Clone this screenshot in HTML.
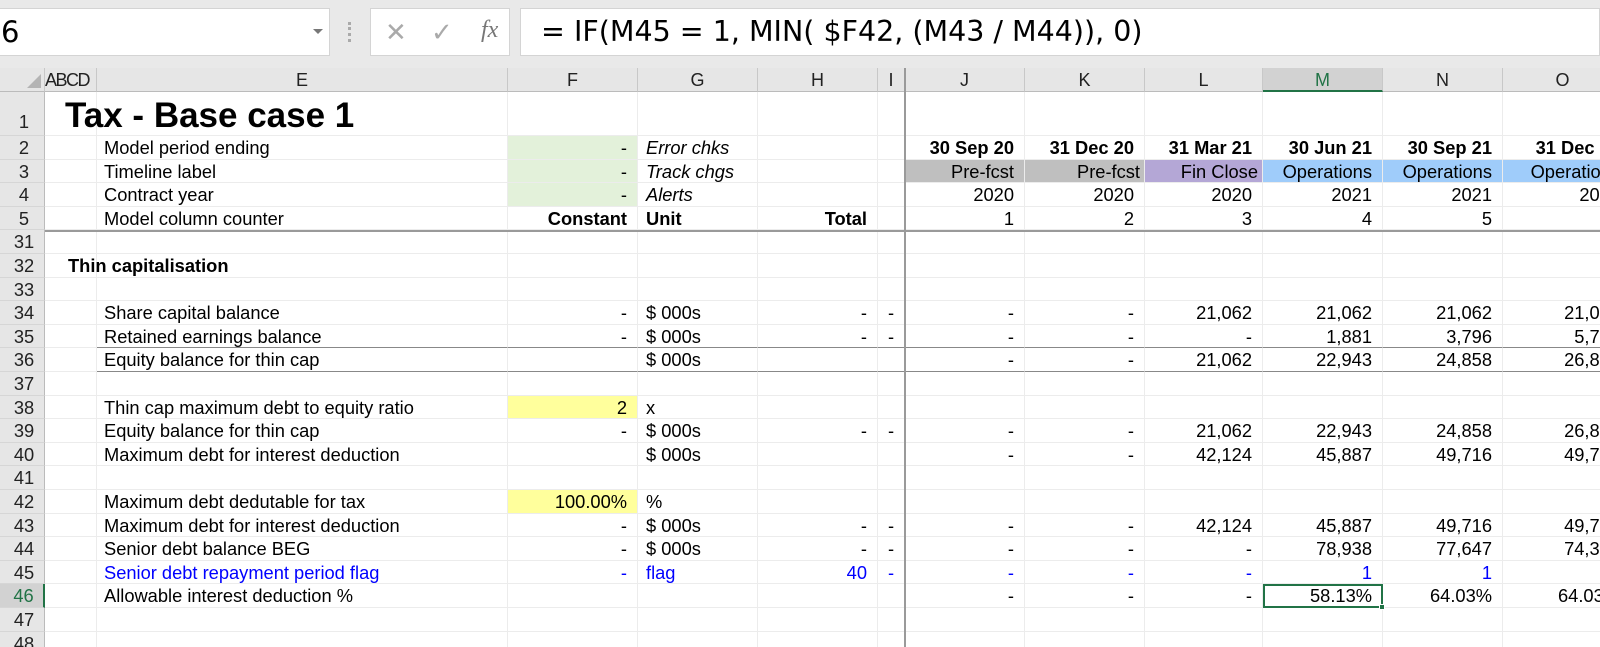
<!DOCTYPE html>
<html><head><meta charset="utf-8"><style>
*{box-sizing:border-box;margin:0;padding:0}
html,body{width:1600px;height:647px;overflow:hidden}
body{background:#fff;font-family:"Liberation Sans",Arial,sans-serif;font-size:18.3px;color:#000}
#w{position:relative;width:1600px;height:647px;overflow:hidden}
.top{position:absolute;left:0;top:0;width:1600px;height:68px;background:#e9e9e9}
.nb{position:absolute;left:-2px;top:8px;width:332px;height:48px;background:#fff;border:1px solid #d4d4d4;font-size:29px;line-height:46px;padding-left:2px;font-family:"DejaVu Sans",sans-serif}
.fb{position:absolute;left:370px;top:8px;width:140px;height:48px;background:#fff;border:1px solid #d4d4d4}
.fx{position:absolute;left:520px;top:8px;width:1080px;height:48px;background:#fff;border:1px solid #d4d4d4;font-size:28.5px;line-height:46px;padding-left:20px;font-family:"DejaVu Sans",sans-serif;white-space:nowrap;overflow:hidden}
.ch{position:absolute;top:68px;height:24px;background:#e6e6e6;border-right:1px solid #c8c8c8;border-bottom:1px solid #bbb;text-align:center;font-size:18px;line-height:24px;color:#222;overflow:hidden}
.row{position:absolute;left:0;height:23.6px;width:1640px;display:flex}
.row>span{display:block;height:100%;border-right:1px solid #ececec;border-bottom:1px solid #ececec;line-height:23px;white-space:nowrap;overflow:hidden;flex:none}
.rh{width:45px;background:#e6e6e6!important;border-right:1px solid #bbb!important;border-bottom:1px solid #d6d6d6!important;text-align:center;color:#222;padding-left:4px}
.a{width:52px}.e{width:411px;padding-left:7px}.f{width:130px;text-align:right;padding-right:10px}.g{width:120px;padding-left:8px}.h{width:120px;text-align:right;padding-right:10px}.i{width:27px;text-align:center}
.j,.k,.m,.n{width:120px;text-align:right;padding-right:10px}.l{width:118px;text-align:right;padding-right:10px}.o{width:128px;text-align:right;padding-right:10px}
.bl{color:#0000ff}.b{font-weight:bold}.it{font-style:italic}
.gr{background:#e3f1da}.y{background:#ffff9c}
</style></head><body><div id="w">
<div class="top">
<div class="nb">6</div>
<div style="position:absolute;left:313px;top:29px;border-left:5px solid transparent;border-right:5px solid transparent;border-top:5px solid #777"></div>
<div style="position:absolute;left:348px;top:22px;width:3px;height:20px;border-left:3px dotted #aaa"></div>
<div class="fb">
<span style="position:absolute;left:14px;top:8px;font-size:26px;color:#aaa">✕</span>
<span style="position:absolute;left:60px;top:8px;font-size:26px;color:#aaa">✓</span>
<span style="position:absolute;left:110px;top:8px;font-size:24px;color:#777;font-style:italic;font-family:'Liberation Serif',serif">fx</span>
</div>
<div class="fx">= IF(M45 = 1, MIN( $F42, (M43 / M44)), 0)</div>
</div>
<div class="ch" style="left:0;width:45px;background:#e6e6e6"><div style="position:absolute;right:3px;bottom:3px;border-left:14px solid transparent;border-bottom:14px solid #b4b4b4"></div></div>
<div class="ch" style="left:45px;width:52px;text-align:left;letter-spacing:-1.5px">ABCD</div>
<div class="ch" style="left:97px;width:411px">E</div>
<div class="ch" style="left:508px;width:130px">F</div>
<div class="ch" style="left:638px;width:120px">G</div>
<div class="ch" style="left:758px;width:120px">H</div>
<div class="ch" style="left:878px;width:27px">I</div>
<div class="ch" style="left:905px;width:120px">J</div>
<div class="ch" style="left:1025px;width:120px">K</div>
<div class="ch" style="left:1145px;width:118px">L</div>
<div class="ch" style="left:1263px;width:120px;background:#d2d2d2;color:#217346;border-bottom:2px solid #217346">M</div>
<div class="ch" style="left:1383px;width:120px">N</div>
<div class="ch" style="left:1503px;width:120px">O</div>

<div class="row" style="top:92px;height:44px"><span class="rh" style="line-height:60px">1</span><span class="a"></span><span class="e" style="font-size:35px;font-weight:bold;line-height:48px;padding-left:0;margin-left:-32px;width:443px">Tax - Base case 1</span><span class="f"></span><span class="g"></span><span class="h"></span><span class="i"></span><span class="j"></span><span class="k"></span><span class="l"></span><span class="m"></span><span class="n"></span><span class="o"></span></div>

<div class="row" style="top:136px"><span class="rh">2</span><span class="a"></span><span class="e">Model period ending</span><span class="f gr">-</span><span class="g it">Error chks</span><span class="h"></span><span class="i"></span><span class="j b">30 Sep 20</span><span class="k b">31 Dec 20</span><span class="l b">31 Mar 21</span><span class="m b">30 Jun 21</span><span class="n b">30 Sep 21</span><span class="o b">31 Dec 21</span></div>
<div class="row" style="top:159.6px"><span class="rh">3</span><span class="a"></span><span class="e">Timeline label</span><span class="f gr">-</span><span class="g it">Track chgs</span><span class="h"></span><span class="i"></span><span class="j" style="background:#bfbfbf">Pre-fcst</span><span class="k" style="background:#bfbfbf;padding-right:4px">Pre-fcst</span><span class="l" style="background:#b4a7d6;padding-right:4px">Fin Close</span><span class="m" style="background:#9fccfa">Operations</span><span class="n" style="background:#9fccfa">Operations</span><span class="o" style="background:#9fccfa">Operations</span></div>
<div class="row" style="top:183.2px"><span class="rh">4</span><span class="a"></span><span class="e">Contract year</span><span class="f gr">-</span><span class="g it">Alerts</span><span class="h"></span><span class="i"></span><span class="j">2020</span><span class="k">2020</span><span class="l">2020</span><span class="m">2021</span><span class="n">2021</span><span class="o">2021</span></div>
<div class="row" style="top:206.8px"><span class="rh">5</span><span class="a"></span><span class="e">Model column counter</span><span class="f b">Constant</span><span class="g b">Unit</span><span class="h b">Total</span><span class="i"></span><span class="j">1</span><span class="k">2</span><span class="l">3</span><span class="m">4</span><span class="n">5</span><span class="o">6</span></div>

<div class="row" style="top:230.4px"><span class="rh">31</span><span class="a"></span><span class="e"></span><span class="f"></span><span class="g"></span><span class="h"></span><span class="i"></span><span class="j"></span><span class="k"></span><span class="l"></span><span class="m"></span><span class="n"></span><span class="o"></span></div>
<div class="row" style="top:254px"><span class="rh">32</span><span class="a"></span><span class="e b" style="padding-left:0;margin-left:-29px;width:440px">Thin capitalisation</span><span class="f"></span><span class="g"></span><span class="h"></span><span class="i"></span><span class="j"></span><span class="k"></span><span class="l"></span><span class="m"></span><span class="n"></span><span class="o"></span></div>
<div class="row" style="top:277.6px"><span class="rh">33</span><span class="a"></span><span class="e"></span><span class="f"></span><span class="g"></span><span class="h"></span><span class="i"></span><span class="j"></span><span class="k"></span><span class="l"></span><span class="m"></span><span class="n"></span><span class="o"></span></div>
<div class="row" style="top:301.2px"><span class="rh">34</span><span class="a"></span><span class="e">Share capital balance</span><span class="f">-</span><span class="g">$ 000s</span><span class="h">-</span><span class="i">-</span><span class="j">-</span><span class="k">-</span><span class="l">21,062</span><span class="m">21,062</span><span class="n">21,062</span><span class="o">21,062</span></div>
<div class="row" style="top:324.8px"><span class="rh">35</span><span class="a"></span><span class="e" style="border-bottom:1px solid #888">Retained earnings balance</span><span class="f" style="border-bottom:1px solid #888">-</span><span class="g" style="border-bottom:1px solid #888">$ 000s</span><span class="h" style="border-bottom:1px solid #888">-</span><span class="i" style="border-bottom:1px solid #888">-</span><span class="j" style="border-bottom:1px solid #888">-</span><span class="k" style="border-bottom:1px solid #888">-</span><span class="l" style="border-bottom:1px solid #888">-</span><span class="m" style="border-bottom:1px solid #888">1,881</span><span class="n" style="border-bottom:1px solid #888">3,796</span><span class="o" style="border-bottom:1px solid #888">5,747</span></div>
<div class="row" style="top:348.4px"><span class="rh">36</span><span class="a"></span><span class="e" style="border-bottom:1px solid #888">Equity balance for thin cap</span><span class="f" style="border-bottom:1px solid #888"></span><span class="g" style="border-bottom:1px solid #888">$ 000s</span><span class="h" style="border-bottom:1px solid #888"></span><span class="i" style="border-bottom:1px solid #888"></span><span class="j" style="border-bottom:1px solid #888">-</span><span class="k" style="border-bottom:1px solid #888">-</span><span class="l" style="border-bottom:1px solid #888">21,062</span><span class="m" style="border-bottom:1px solid #888">22,943</span><span class="n" style="border-bottom:1px solid #888">24,858</span><span class="o" style="border-bottom:1px solid #888">26,809</span></div>
<div class="row" style="top:372px"><span class="rh">37</span><span class="a"></span><span class="e"></span><span class="f"></span><span class="g"></span><span class="h"></span><span class="i"></span><span class="j"></span><span class="k"></span><span class="l"></span><span class="m"></span><span class="n"></span><span class="o"></span></div>
<div class="row" style="top:395.6px"><span class="rh">38</span><span class="a"></span><span class="e">Thin cap maximum debt to equity ratio</span><span class="f y">2</span><span class="g">x</span><span class="h"></span><span class="i"></span><span class="j"></span><span class="k"></span><span class="l"></span><span class="m"></span><span class="n"></span><span class="o"></span></div>
<div class="row" style="top:419.2px"><span class="rh">39</span><span class="a"></span><span class="e">Equity balance for thin cap</span><span class="f">-</span><span class="g">$ 000s</span><span class="h">-</span><span class="i">-</span><span class="j">-</span><span class="k">-</span><span class="l">21,062</span><span class="m">22,943</span><span class="n">24,858</span><span class="o">26,809</span></div>
<div class="row" style="top:442.8px"><span class="rh">40</span><span class="a"></span><span class="e">Maximum debt for interest deduction</span><span class="f"></span><span class="g">$ 000s</span><span class="h"></span><span class="i"></span><span class="j">-</span><span class="k">-</span><span class="l">42,124</span><span class="m">45,887</span><span class="n">49,716</span><span class="o">49,716</span></div>
<div class="row" style="top:466.4px"><span class="rh">41</span><span class="a"></span><span class="e"></span><span class="f"></span><span class="g"></span><span class="h"></span><span class="i"></span><span class="j"></span><span class="k"></span><span class="l"></span><span class="m"></span><span class="n"></span><span class="o"></span></div>
<div class="row" style="top:490px"><span class="rh">42</span><span class="a"></span><span class="e">Maximum debt dedutable for tax</span><span class="f y">100.00%</span><span class="g">%</span><span class="h"></span><span class="i"></span><span class="j"></span><span class="k"></span><span class="l"></span><span class="m"></span><span class="n"></span><span class="o"></span></div>
<div class="row" style="top:513.6px"><span class="rh">43</span><span class="a"></span><span class="e">Maximum debt for interest deduction</span><span class="f">-</span><span class="g">$ 000s</span><span class="h">-</span><span class="i">-</span><span class="j">-</span><span class="k">-</span><span class="l">42,124</span><span class="m">45,887</span><span class="n">49,716</span><span class="o">49,716</span></div>
<div class="row" style="top:537.2px"><span class="rh">44</span><span class="a"></span><span class="e">Senior debt balance BEG</span><span class="f">-</span><span class="g">$ 000s</span><span class="h">-</span><span class="i">-</span><span class="j">-</span><span class="k">-</span><span class="l">-</span><span class="m">78,938</span><span class="n">77,647</span><span class="o">74,301</span></div>
<div class="row bl" style="top:560.8px"><span class="rh" style="color:#222">45</span><span class="a"></span><span class="e">Senior debt repayment period flag</span><span class="f">-</span><span class="g">flag</span><span class="h">40</span><span class="i">-</span><span class="j">-</span><span class="k">-</span><span class="l">-</span><span class="m">1</span><span class="n">1</span><span class="o">1</span></div>
<div class="row" style="top:584.4px"><span class="rh" style="background:#d2d2d2!important;color:#217346;border-right:2px solid #217346!important">46</span><span class="a"></span><span class="e">Allowable interest deduction %</span><span class="f"></span><span class="g"></span><span class="h"></span><span class="i"></span><span class="j">-</span><span class="k">-</span><span class="l">-</span><span class="m" style="outline:2px solid #217346;outline-offset:-2px">58.13%</span><span class="n">64.03%</span><span class="o">64.03%</span></div>
<div class="row" style="top:608px"><span class="rh">47</span><span class="a"></span><span class="e"></span><span class="f"></span><span class="g"></span><span class="h"></span><span class="i"></span><span class="j"></span><span class="k"></span><span class="l"></span><span class="m"></span><span class="n"></span><span class="o"></span></div>
<div class="row" style="top:631.6px"><span class="rh">48</span><span class="a"></span><span class="e"></span><span class="f"></span><span class="g"></span><span class="h"></span><span class="i"></span><span class="j"></span><span class="k"></span><span class="l"></span><span class="m"></span><span class="n"></span><span class="o"></span></div>

<div style="position:absolute;left:1379px;top:604px;width:6px;height:6px;background:#217346;border:1px solid #fff"></div>
<div style="position:absolute;left:904px;top:68px;width:2px;height:579px;background:#9a9a9a"></div>
<div style="position:absolute;left:45px;top:230px;width:1555px;height:2px;background:#9a9a9a"></div>
</div></body></html>
